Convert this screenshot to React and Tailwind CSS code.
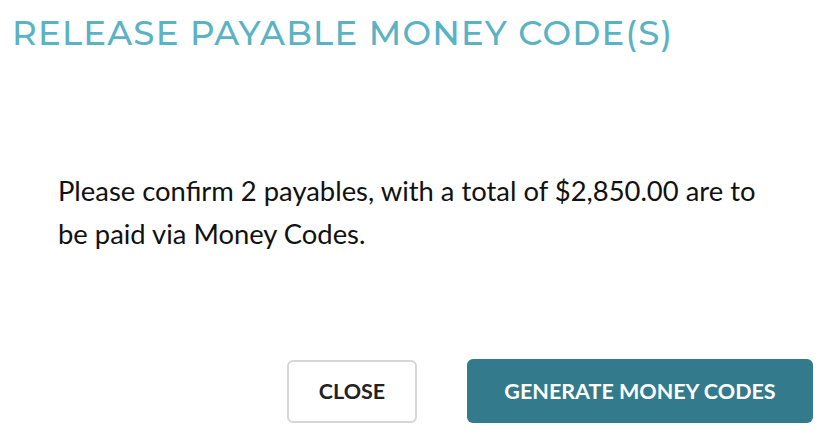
import React from "react";

export default function App() {
  return (
    <div className="w-[822px] h-[436px] bg-white flex flex-col font-['Lato',sans-serif]">
      <h1 className="pl-[12px] pt-[13px] text-[34px] leading-[40px] font-medium tracking-[1.2px] text-[#5ab3c4] font-['Montserrat','Open_Sans',sans-serif]">
        RELEASE PAYABLE MONEY CODE(S)
      </h1>

      <div className="pl-[58px] pt-[116px]">
        <p className="w-[720px] text-[27.4px] leading-[43px] text-[#111111]">
          Please confirm 2 payables, with a total of $2,850.00 are to be paid via Money Codes.
        </p>
      </div>

      <div className="flex-1" />

      <div className="flex justify-end items-center gap-[50px] pr-[9px] pb-[13px]">
        <button className="w-[130px] h-[63px] rounded-[6px] border-2 border-[#d6d6d6] bg-white text-[21.5px] font-bold text-[#222222]">
          CLOSE
        </button>
        <button className="w-[346px] h-[64px] rounded-[6px] bg-[#337a8c] text-[21.5px] font-bold text-white">
          GENERATE MONEY CODES
        </button>
      </div>
    </div>
  );
}
